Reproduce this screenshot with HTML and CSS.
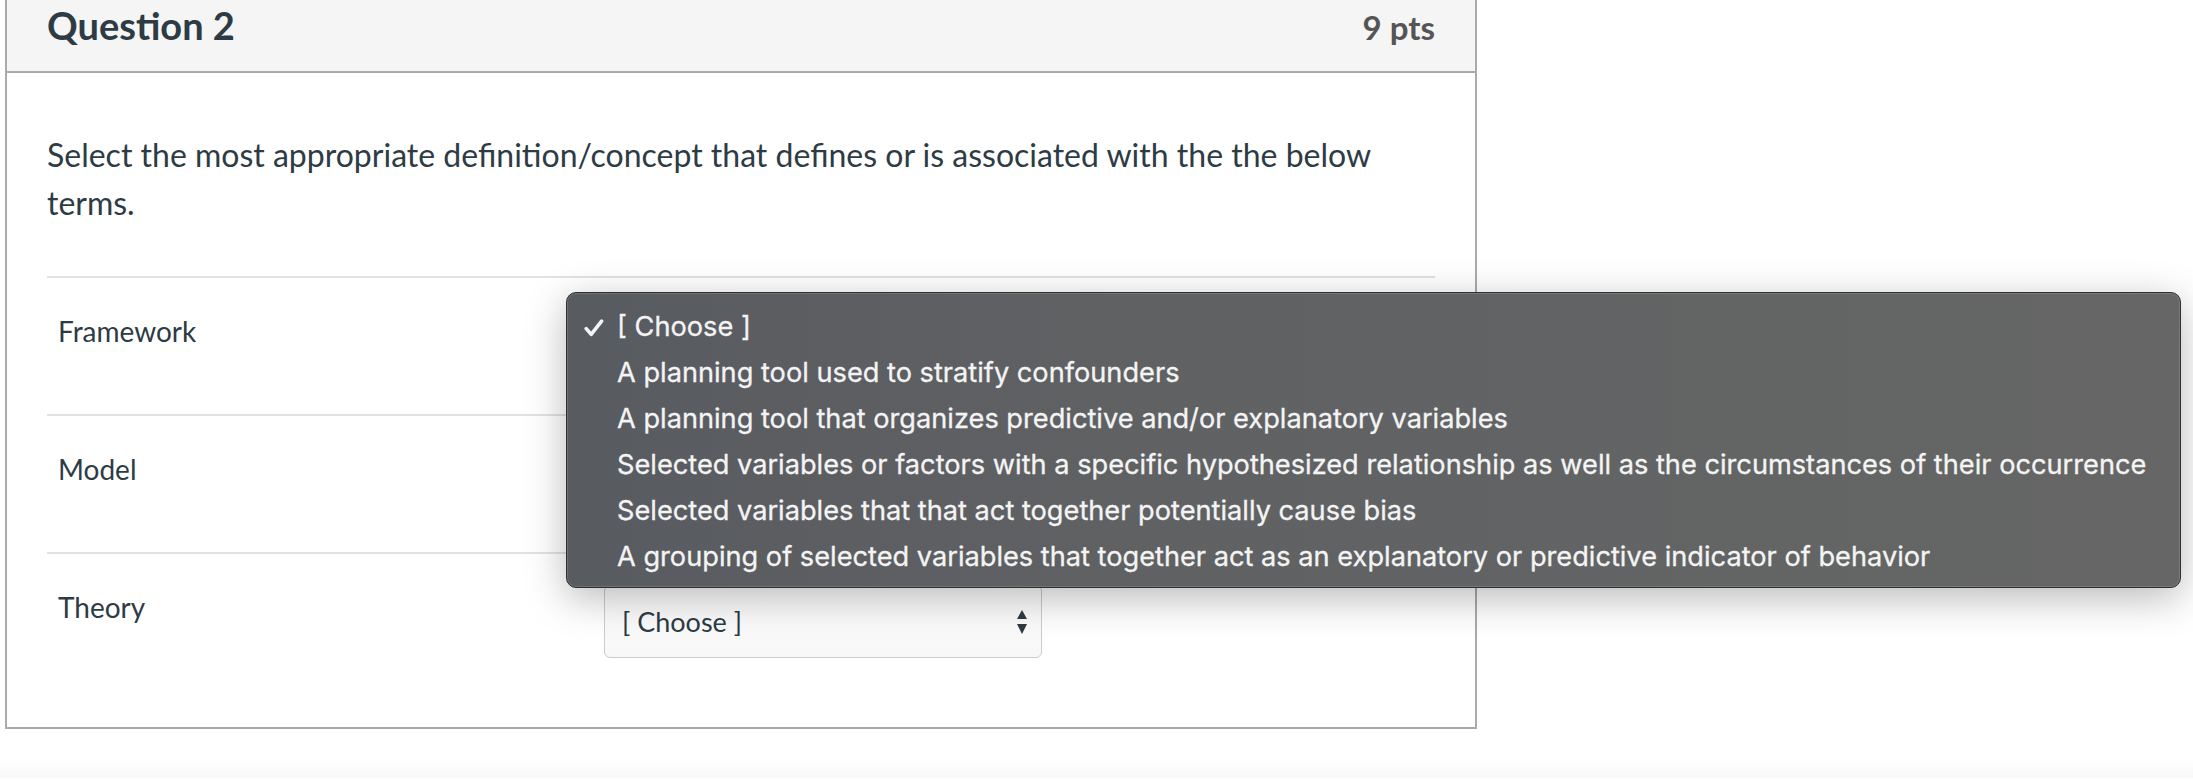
FILE: index.html
```html
<!DOCTYPE html>
<html lang="en">
<head>
<meta charset="utf-8">
<title>Question 2</title>
<link rel="stylesheet" href="styles.css">
</head>
<body>
<div class="page">
  <div class="card">
    <div class="header">
      <h2 class="title">Question 2</h2>
      <div class="pts">9 pts</div>
    </div>
    <div class="body">
      <p class="prompt">Select the most appropriate definition/concept that defines or is associated with the the below terms.</p>
      <div class="rows">
        <div class="row">
          <div class="label">Framework</div>
          <div class="select"><span>[ Choose ]</span><svg class="arrows" width="10" height="24" viewBox="0 0 10 24"><path d="M5 0 L10 9 L0 9 Z M0 14 L10 14 L5 24 Z" fill="#2d3b45"/></svg></div>
        </div>
        <div class="row">
          <div class="label">Model</div>
          <div class="select"><span>[ Choose ]</span><svg class="arrows" width="10" height="24" viewBox="0 0 10 24"><path d="M5 0 L10 9 L0 9 Z M0 14 L10 14 L5 24 Z" fill="#2d3b45"/></svg></div>
        </div>
        <div class="row">
          <div class="label">Theory</div>
          <div class="select"><span>[ Choose ]</span><svg class="arrows" width="10" height="24" viewBox="0 0 10 24"><path d="M5 0 L10 9 L0 9 Z M0 14 L10 14 L5 24 Z" fill="#2d3b45"/></svg></div>
        </div>
      </div>
    </div>
  </div>
  <div class="strip"></div>
  <ul class="menu">
    <li class="item checked"><svg class="check" width="20" height="18" viewBox="0 0 20 18"><path d="M2.2 9.6 L7.2 15.4 L17.6 2.2" fill="none" stroke="#f4f4f4" stroke-width="3.6" stroke-linecap="round" stroke-linejoin="round"/></svg>[ Choose ]</li>
    <li class="item">A planning tool used to stratify confounders</li>
    <li class="item">A planning tool that organizes predictive and/or explanatory variables</li>
    <li class="item">Selected variables or factors with a specific hypothesized relationship as well as the circumstances of their occurrence</li>
    <li class="item">Selected variables that that act together potentially cause bias</li>
    <li class="item">A grouping of selected variables that together act as an explanatory or predictive indicator of behavior</li>
  </ul>
</div>
</body>
</html>
```

FILE: styles.css
```css
* { box-sizing: border-box; }

html, body {
  margin: 0;
  padding: 0;
  background: #ffffff;
}

body {
  font-family: "Lato", "Liberation Sans", sans-serif;
  color: #2d3b45;
  width: 2193px;
  height: 780px;
  overflow: hidden;
}

.page {
  position: relative;
  width: 2193px;
  height: 780px;
}

.card {
  width: 1472px;
  margin: -2px 0 0 5px;
  border: 2px solid #aaaaaa;
  background: #ffffff;
}

.header {
  display: flex;
  justify-content: space-between;
  align-items: baseline;
  height: 73px;
  padding: 3px 40px 0 40px;
  background: #f5f5f5;
  border-bottom: 2px solid #aaaaaa;
}

.title {
  margin: 0;
  font-size: 38px;
  line-height: 1.2;
  font-weight: 700;
  color: #2d3b45;
}

.pts {
  font-size: 33px;
  line-height: 1.2;
  font-weight: 700;
  color: #555555;
}

.body {
  padding: 58px 40px 37px 40px;
}

.prompt {
  max-width: 1360px;
  margin: 0 0 49px 0;
  font-size: 32px;
  line-height: 48px;
  color: #2d3b45;
}

.row {
  display: flex;
  align-items: flex-start;
  border-top: 2px solid #e2e2e2;
  padding: 31px 0 32px 11px;
}

.label {
  width: 546px;
  margin-top: 6px;
  font-size: 28px;
  line-height: 1.2;
  color: #2d3b45;
}

.select {
  width: 438px;
  height: 73px;
  display: flex;
  align-items: center;
  justify-content: space-between;
  padding: 0 14px 0 17px;
  border: 1px solid #c7cdd1;
  border-radius: 6px;
  background: linear-gradient(#ffffff, #f7f7f7);
  font-size: 27px;
  color: #2d3b45;
}

.arrows {
  display: block;
}

.strip {
  height: 20px;
  margin-top: 29px;
  background: linear-gradient(#ffffff, #f8f8f8);
}

.menu {
  position: absolute;
  left: 566px;
  top: 294px;
  width: 1615px;
  height: 296px;
  margin: 0;
  padding: 11px 0 8px 0;
  list-style: none;
  border: 1px solid #2e2e2e;
  border-radius: 10px;
  background: linear-gradient(90deg, #585b60 0%, #606163 35%, #656665 100%);
  box-shadow: inset 0 0 0 1px rgba(255, 255, 255, 0.14), 0 10px 40px rgba(0, 0, 0, 0.28);
  font-family: "Inter", "Liberation Sans", sans-serif;
  font-size: 27.2px;
  color: #f4f4f4;
  -webkit-text-stroke: 0.3px #f4f4f4;
}

.item {
  position: relative;
  height: 46px;
  line-height: 46px;
  padding-left: 50px;
  white-space: nowrap;
}

.check {
  position: absolute;
  left: 17px;
  top: 15px;
}
```
